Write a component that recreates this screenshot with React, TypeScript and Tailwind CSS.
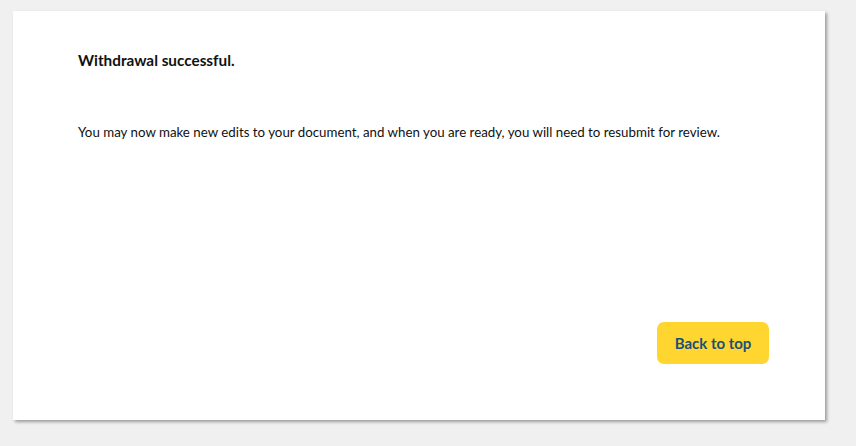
export default function App() {
  return (
    <div className="min-h-screen bg-[#f0f0f0] pt-[11px] pl-[13px]" style={{ fontFamily: "Lato, 'Liberation Sans', sans-serif" }}>
      <div className="flex h-[409px] w-[812px] flex-col bg-white pb-[56px] pl-[65px] pr-[56px] pt-[38px] shadow-[2px_2px_3px_rgba(0,0,0,0.35)]">
        <h1 className="text-[15.3px] font-bold leading-[22px] text-[#111]">Withdrawal successful.</h1>
        <p className="mt-[51px] text-[13.3px] leading-[20px] text-[#111]">
          You may now make new edits to your document, and when you are ready, you will need to resubmit for review.
        </p>
        <div className="mt-auto flex justify-end">
          <button className="h-[42px] w-[112px] rounded-[7px] bg-[#ffd62f] text-[15px] font-bold text-[#1a4e7d]">
            Back to top
          </button>
        </div>
      </div>
    </div>
  );
}
